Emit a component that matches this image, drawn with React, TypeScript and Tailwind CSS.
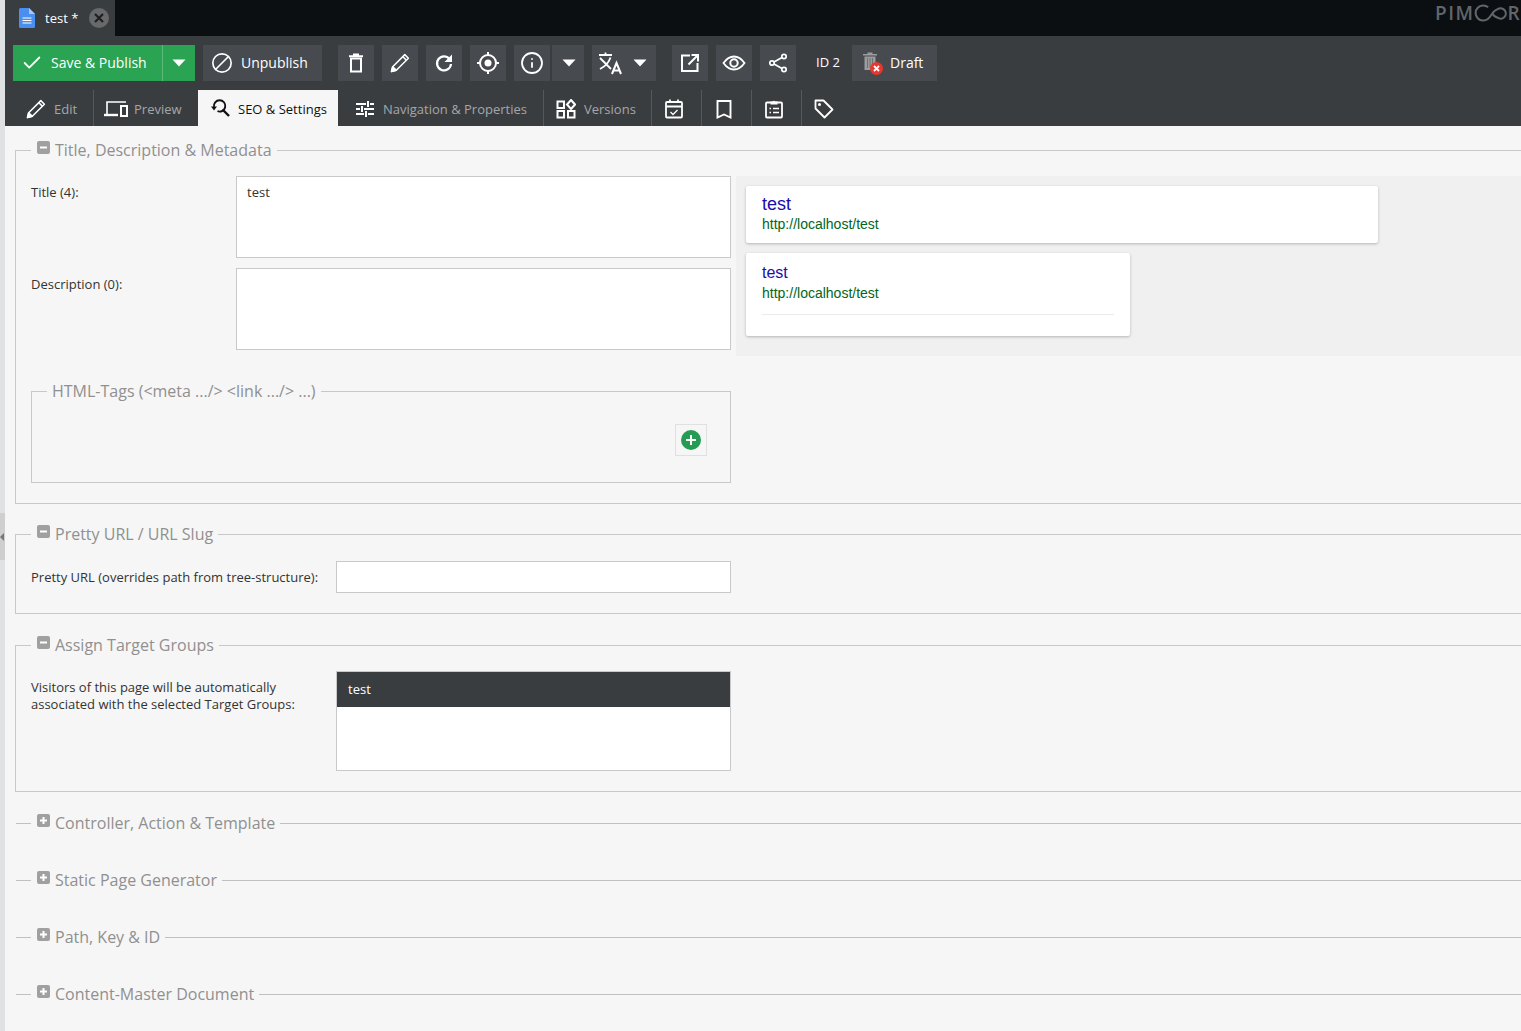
import React from "react";
import { Check, Ban, Info } from "lucide-react";

const TrashIcon = () => (
  <svg width="20" height="20" viewBox="0 0 20 20" fill="none" stroke="white" strokeWidth="2">
    <path d="M3 3.200h14M7 1.500h6" />
    <rect x="5" y="5.500" width="10" height="13" />
  </svg>
);

const PencilIcon = () => (
  <svg width="20" height="20" viewBox="0 0 20 20" fill="none" stroke="white" strokeWidth="1.500" strokeLinejoin="round">
    <path d="M1.500 18.500l1.200-4.800L14.800 1.600l3.600 3.600L6.300 17.300z" />
    <path d="M1.500 18.500l1.200-4.800 3.600 3.600z" fill="white" />
    <path d="M12.800 3.600l3.600 3.600" />
  </svg>
);

const ReloadIcon = () => (
  <svg width="20" height="20" viewBox="0 0 20 20" fill="none" stroke="white" strokeWidth="2.200">
    <path d="M15.500 6A7 7 0 1 0 17 11" />
    <path d="M18 1.500v7.500h-7.500z" fill="white" stroke="none" />
  </svg>
);

const TargetIcon = () => (
  <svg width="24" height="24" viewBox="0 0 24 24" fill="none" stroke="white" strokeWidth="2">
    <circle cx="12" cy="12" r="8" />
    <circle cx="12" cy="12" r="3.500" fill="white" stroke="none" />
    <path d="M12 1v3M12 20v3M1 12h3M20 12h3" />
  </svg>
);

const DropArrow = () => (
  <svg width="14" height="8" viewBox="0 0 14 8"><path d="M0.500 0.500h13L7 7.500z" fill="white" /></svg>
);

const TranslateIcon = () => (
  <svg width="24" height="24" viewBox="0 0 24 24" fill="none" stroke="white" strokeWidth="1.800">
    <path d="M1 4h13M7.500 1.500V4" />
    <path d="M2 7l11 11M12.500 6.500C11 11 7 15.500 2 18" />
    <path d="M14 23l4.500-11L23 23M15.500 19.500h6" strokeWidth="2" />
  </svg>
);

const OpenIcon = () => (
  <svg width="20" height="20" viewBox="0 0 20 20" fill="none" stroke="white" strokeWidth="2">
    <path d="M10 2.500H2v15.500h15.500V10" />
    <path d="M8.500 11.500L17.500 2.500" />
    <path d="M11.500 2H18v6.500" />
  </svg>
);

const EyeIcon = () => (
  <svg width="24" height="24" viewBox="0 0 24 24" fill="none" stroke="white" strokeWidth="1.800">
    <path d="M1.500 12C5 7 8.500 5.500 12 5.500S19 7 22.500 12C19 17 15.500 18.500 12 18.500S5 17 1.500 12z" />
    <circle cx="12" cy="12" r="3.700" strokeWidth="2" />
  </svg>
);

const ShareIcon = () => (
  <svg width="20" height="20" viewBox="0 0 20 20" fill="none" stroke="white" strokeWidth="1.700">
    <circle cx="16" cy="3.500" r="2.200" />
    <circle cx="4" cy="10" r="2.200" />
    <circle cx="16" cy="16.500" r="2.200" />
    <path d="M6 9l8-4.500M6 11l8 4.500" />
  </svg>
);

const PreviewIcon = () => (
  <svg width="24" height="18" viewBox="0 0 24 18" fill="none" stroke="white" strokeWidth="1.600">
    <path d="M3 14V2h19" />
    <path d="M0 15h14" strokeWidth="2.400" />
    <rect x="17" y="6" width="6" height="10" strokeWidth="2" />
  </svg>
);

const SeoIcon = () => (
  <svg width="20" height="20" viewBox="0 0 20 20" fill="none" stroke="#111" strokeWidth="1.900">
    <path d="M3 8A5.700 5.700 0 1 1 6.500 12.200" />
    <path d="M0 7.500h6l-3 4z" fill="#111" stroke="none" />
    <path d="M11.500 10.500l6.500 6.500" strokeWidth="2.400" />
  </svg>
);

const SlidersIcon = () => (
  <svg width="20" height="20" viewBox="0 0 20 20" fill="none" stroke="white" strokeWidth="2">
    <path d="M1 5h10M15 5h4M1 10h4M9 10h10M1 15h8M13 15h6" />
    <path d="M13 2v6M7 7v6M11 12v6" />
  </svg>
);

const VersionsIcon = () => (
  <svg width="20" height="20" viewBox="0 0 20 20" fill="none" stroke="white" strokeWidth="2">
    <rect x="1.500" y="2.500" width="6.500" height="6.500" />
    <rect x="1.500" y="12" width="6.500" height="6.500" />
    <rect x="12" y="12" width="6.500" height="6.500" />
    <path d="M15 1l4 4.500-4 4.500-4-4.500z" />
  </svg>
);

const CalendarIcon = () => (
  <svg width="20" height="20" viewBox="0 0 20 20" fill="none" stroke="white" strokeWidth="1.800">
    <rect x="2" y="3" width="16" height="15.500" rx="1" />
    <path d="M2 7.500h16M6 0.500V4M14 0.500V4" />
    <path d="M6.500 13l2.500 2.500 4.500-4.500" strokeWidth="1.300" />
  </svg>
);

const BookmarkIcon = () => (
  <svg width="20" height="20" viewBox="0 0 20 20" fill="none" stroke="white" strokeWidth="1.900">
    <path d="M3.500 2h13v16.500L10 15.500l-6.500 3z" />
  </svg>
);

const ClipboardIcon = () => (
  <svg width="20" height="20" viewBox="0 0 20 20" fill="none" stroke="white" strokeWidth="1.800">
    <rect x="2" y="3.500" width="16" height="15" rx="1" />
    <path d="M6.500 5.500V2.500h2.400a1.200 1.200 0 0 1 2.200 0h2.400v3z" fill="white" stroke="none" />
    <path d="M5.500 9.500h1.500M9 9.500h6M5.500 13.500h1.500M9 13.500h6" strokeWidth="1.500" />
  </svg>
);

const TagIcon = () => (
  <svg width="20" height="20" viewBox="0 0 20 20" fill="none" stroke="white" strokeWidth="1.800" strokeLinejoin="round">
    <path d="M1.500 1.500h8l9 9-8 8-9-9z" />
    <circle cx="5.500" cy="5.500" r="1.500" fill="white" stroke="none" />
  </svg>
);

const DraftIcon = () => (
  <span className="relative block w-[20px] h-[22px]">
    <svg width="14" height="18" viewBox="0 0 14 18" fill="#9a9c9e" className="ml-[1px]">
      <path d="M0 2h14v1.500H0zM4.500 0.500h5V2h-5z" />
      <path d="M1.500 4.500h11V18h-11z" />
      <path d="M4.500 6v10M7 6v10M9.500 6v10" stroke="#6f7173" />
    </svg>
    <span className="absolute right-[-1px] bottom-[-1px] w-[13px] h-[13px] rounded-full bg-[#e5392f] flex items-center justify-center">
      <svg width="7" height="7" viewBox="0 0 7 7" stroke="white" strokeWidth="1.800"><path d="M1 1l5 5M6 1l-5 5" /></svg>
    </span>
  </span>
);

const ToolBtn = ({ children, className = "w-9" }: { children: React.ReactNode; className?: string }) => (
  <div className={`h-9 bg-[#474a4e] flex items-center justify-center ${className}`}>{children}</div>
);

const Toggle = ({ open }: { open: boolean }) => (
  <span className="inline-block align-[2px] mr-[5px]">
    <svg width="13" height="13" viewBox="0 0 13 13" className="block">
      <rect width="13" height="13" rx="2" fill="#a0a0a0" />
      <path d={open ? "M3 6.500h7" : "M3 6.500h7M6.500 3v7"} stroke="white" strokeWidth="2" />
    </svg>
  </span>
);

const Section = ({ title, open = true, children }: { title: string; open?: boolean; children?: React.ReactNode }) => (
  <fieldset className={open ? "border border-[#c8c8c8] -mr-[20px] px-[15px] min-w-0" : "border-t border-[#c0c0c0] ml-[1px] -mr-[20px] min-w-0 h-[24px]"}>
    <legend className={`${open ? "ml-0" : "ml-[15px]"} pl-[6px] pr-[5px] h-[24px] text-[16px] leading-[24px] text-[#909090] whitespace-nowrap`}>
      <Toggle open={open} />
      {title}
    </legend>
    {children}
  </fieldset>
);

const fieldClass = "block bg-white border border-[#c9c9c9] w-[495px]";

export default function App() {
  return (
    <div className="w-[1521px] h-[1031px] overflow-hidden relative flex bg-[#f6f6f6] font-['Open_Sans',sans-serif] text-[13px] text-[#333]">
      {/* collapse handle */}
      <div className="w-[5px] shrink-0 bg-[#e0e1e3]" />
      <div className="absolute left-0 top-[513px] w-[5px] h-[47px] bg-[#cfcfcf] flex items-center">
        <span className="w-0 h-0 border-y-[4px] border-y-transparent border-r-[4px] border-r-[#777]" />
      </div>

      <div className="flex-1 min-w-0 flex flex-col">
        {/* top tab strip */}
        <div className="h-9 shrink-0 bg-[#0b0f12] flex items-stretch">
          <div className="w-[110px] bg-[#3a3d40] flex items-center pl-[14px]">
            <svg width="16" height="20" viewBox="0 0 16 20" className="mr-[10px]">
              <path d="M1.500 0H10l6 6v12.500a1.500 1.500 0 0 1-1.500 1.500h-13A1.500 1.500 0 0 1 0 18.500v-17A1.500 1.500 0 0 1 1.500 0z" fill="#4a8ef0" />
              <path d="M10 0l6 6h-6z" fill="#a6c8fa" />
              <path d="M3.500 10h9M3.500 12.500h9M3.500 15h9" stroke="white" />
            </svg>
            <span className="text-white text-[13px] whitespace-nowrap pt-[2px]">test *</span>
            <span className="ml-[11px] w-[20px] h-[20px] rounded-full bg-[#68696b] flex items-center justify-center shrink-0">
              <svg width="10" height="10" viewBox="0 0 10 10" stroke="#1d1f21" strokeWidth="2.200"><path d="M1 1l8 8M9 1l-8 8" /></svg>
            </span>
          </div>
          <div className="ml-auto w-[86px] flex items-center whitespace-nowrap text-[#62656a] text-[19px] font-semibold tracking-[1.500px] leading-none pb-[10px]">
            <span>PIM</span>
            <svg width="34" height="20" viewBox="0 0 36 20" fill="none" stroke="#62656a" strokeWidth="2.200" className="shrink-0 -ml-[1px]">
              <path d="M15 4a8 8 0 1 0 0 12c3-2 5-9 10-10a5.500 5.500 0 1 1 0 9c-3-1-5-3-6-5" />
            </svg>
            <span className="tracking-normal">R</span>
          </div>
        </div>

        {/* toolbar */}
        <div className="h-[54px] shrink-0 bg-[#3a3d40] pl-[8px] pt-[9px] flex items-start text-white text-[14px]">
          <div className="h-9 w-[182px] bg-[#2aa352] flex items-center">
            <div className="w-[150px] flex items-center pl-[8px] border-r border-[#5cbb7c] h-full">
              <Check size={22} strokeWidth={2} className="mr-[8px]" />
              <span className="whitespace-nowrap pb-[2px]">Save &amp; Publish</span>
            </div>
            <div className="flex-1 flex justify-center"><DropArrow /></div>
          </div>
          <ToolBtn className="w-[119px] ml-2 justify-start pl-[8px]">
            <Ban size={22} strokeWidth={1.8} className="mr-[8px] -scale-x-100" />
            <span className="pb-[2px]">Unpublish</span>
          </ToolBtn>
          <ToolBtn className="w-9 ml-4"><TrashIcon /></ToolBtn>
          <ToolBtn className="w-9 ml-2"><PencilIcon /></ToolBtn>
          <ToolBtn className="w-9 ml-2"><ReloadIcon /></ToolBtn>
          <ToolBtn className="w-9 ml-2"><TargetIcon /></ToolBtn>
          <ToolBtn className="w-9 ml-2"><Info size={24} strokeWidth={1.8} /></ToolBtn>
          <ToolBtn className="w-[32px] ml-[2px] pl-[2px]"><DropArrow /></ToolBtn>
          <ToolBtn className="w-[64px] ml-2 justify-start pl-[6px]">
            <TranslateIcon />
            <span className="ml-[11px] flex"><DropArrow /></span>
          </ToolBtn>
          <ToolBtn className="w-9 ml-4"><OpenIcon /></ToolBtn>
          <ToolBtn className="w-9 ml-2"><EyeIcon /></ToolBtn>
          <ToolBtn className="w-9 ml-2"><ShareIcon /></ToolBtn>
          <span className="ml-5 w-[24px] h-9 leading-[35px] text-[13px] whitespace-nowrap">ID 2</span>
          <ToolBtn className="w-[85px] ml-3 justify-start pl-[10px]">
            <DraftIcon />
            <span className="ml-[8px] pb-[2px]">Draft</span>
          </ToolBtn>
        </div>

        {/* document tabs */}
        <div className="h-9 shrink-0 bg-[#3a3d40] flex items-stretch text-[13px] text-[#a4a7aa]">
          <div className="w-[89px] border-r border-[#55585c] flex items-center pl-[21px] pt-[2px]">
            <PencilIcon /><span className="ml-2 pt-[2px]">Edit</span>
          </div>
          <div className="w-[104px] flex items-center pl-[10px] pt-[2px]">
            <PreviewIcon /><span className="ml-[6px] pt-[2px]">Preview</span>
          </div>
          <div className="w-[140px] bg-[#f6f6f6] text-[#111] flex items-center pl-[13px] pt-[2px]">
            <SeoIcon /><span className="ml-[7px] pt-[2px] whitespace-nowrap">SEO &amp; Settings</span>
          </div>
          <div className="w-[206px] border-r border-[#55585c] flex items-center pl-[17px] pt-[2px]">
            <SlidersIcon /><span className="ml-2 pt-[2px] whitespace-nowrap">Navigation &amp; Properties</span>
          </div>
          <div className="w-[108px] border-r border-[#55585c] flex items-center pl-[12px] pt-[2px]">
            <VersionsIcon /><span className="ml-2 pt-[2px]">Versions</span>
          </div>
          <div className="w-[50px] border-r border-[#55585c] flex items-center pl-[12px] pt-[2px]"><CalendarIcon /></div>
          <div className="w-[50px] border-r border-[#55585c] flex items-center pl-[12px] pt-[2px]"><BookmarkIcon /></div>
          <div className="w-[50px] border-r border-[#55585c] flex items-center pl-[12px] pt-[2px]"><ClipboardIcon /></div>
          <div className="w-[44px] flex items-center pl-[12px] pt-[1px]"><TagIcon /></div>
        </div>

        {/* form */}
        <div className="flex-1 min-h-0 pl-[10px] pt-[12px] flex flex-col">
          <Section title="Title, Description & Metadata">
            <div className="flex items-start pt-[14px]">
              <div className="w-[700px] shrink-0">
                <div className="flex">
                  <label className="w-[205px] pt-[8px] leading-[17px]">Title (4):</label>
                  <textarea readOnly defaultValue="test" className={`${fieldClass} h-[82px] px-[10px] py-[7px] resize-none outline-none leading-[17px]`} />
                </div>
                <div className="flex mt-[10px]">
                  <label className="w-[205px] pt-[8px] leading-[17px]">Description (0):</label>
                  <textarea readOnly className={`${fieldClass} h-[82px] resize-none outline-none`} />
                </div>
                <fieldset className="mt-[29px] border border-[#c8c8c8] h-[104px] min-w-0 relative">
                  <legend className="ml-[15px] px-[5px] h-[24px] text-[16px] leading-[24px] text-[#909090] whitespace-nowrap">
                    HTML-Tags (&lt;meta .../&gt; &lt;link .../&gt; ...)
                  </legend>
                  <div className="flex justify-end pr-[23px] pt-[21px]">
                    <div className="w-[32px] h-[32px] border border-[#e0e0e0] flex items-center justify-center">
                      <span className="w-[20px] h-[20px] rounded-full bg-[#249c52] flex items-center justify-center">
                        <svg width="10" height="10" viewBox="0 0 10 10" stroke="white" strokeWidth="2"><path d="M0 5h10M5 0v10" /></svg>
                      </span>
                    </div>
                  </div>
                </fieldset>
              </div>
              <div className="ml-[5px] flex-1 h-[180px] bg-[#f0f0f0] p-[10px] font-['Liberation_Sans',Arial,sans-serif]">
                <div className="w-[632px] h-[57px] bg-white rounded-[2px] shadow-[0_1px_3px_rgba(0,0,0,0.25)] pl-[16px] pt-[8px]">
                  <div className="text-[18px] leading-[20px] text-[#1a0dab]">test</div>
                  <div className="text-[14px] leading-[20px] text-[#006621]">http://localhost/test</div>
                </div>
                <div className="w-[384px] h-[83px] mt-[10px] bg-white rounded-[2px] shadow-[0_1px_3px_rgba(0,0,0,0.25)] px-[16px] pt-[10px]">
                  <div className="text-[16px] leading-[20px] text-[#1a0dab]">test</div>
                  <div className="text-[14px] leading-[20px] text-[#006621] pb-[11px] border-b border-[#ebebeb]">http://localhost/test</div>
                </div>
              </div>
            </div>
            <div className="h-[20px]" />
          </Section>

          <div className="mt-[18px]">
            <Section title="Pretty URL / URL Slug">
              <div className="flex items-center pt-[15px] pb-[20px]">
                <label className="w-[305px] shrink-0 whitespace-nowrap pt-[2px]">Pretty URL (overrides path from tree-structure):</label>
                <input readOnly className="block bg-white border border-[#c9c9c9] w-[395px] h-[32px] outline-none" />
              </div>
            </Section>
          </div>

          <div className="mt-[19px]">
            <Section title="Assign Target Groups">
              <div className="flex items-start pt-[14px] pb-[20px]">
                <label className="w-[305px] shrink-0 pt-[8px] leading-[17px]">
                  Visitors of this page will be automatically<br />associated with the selected Target Groups:
                </label>
                <div className="bg-white border border-[#c9c9c9] w-[395px] h-[100px]">
                  <div className="h-[35px] bg-[#3a3d40] text-white pl-[11px] leading-[35px]">test</div>
                </div>
              </div>
            </Section>
          </div>

          <div className="mt-[19px] flex flex-col gap-[33px]">
            <Section title="Controller, Action & Template" open={false} />
            <Section title="Static Page Generator" open={false} />
            <Section title="Path, Key & ID" open={false} />
            <Section title="Content-Master Document" open={false} />
          </div>
        </div>
      </div>
    </div>
  );
}
